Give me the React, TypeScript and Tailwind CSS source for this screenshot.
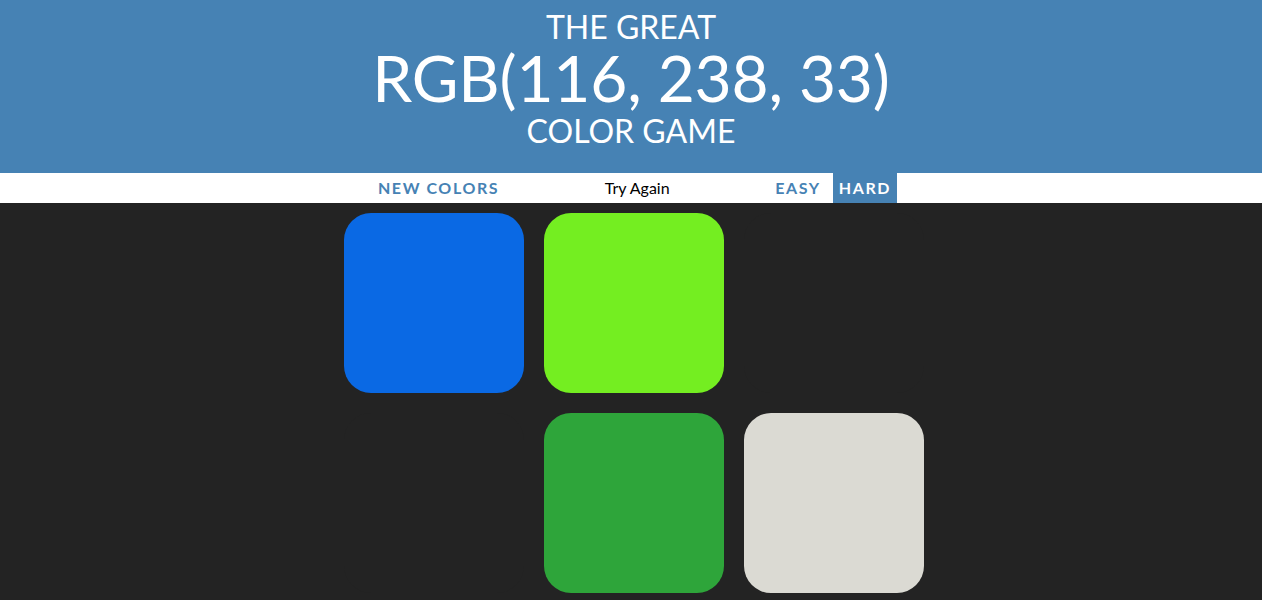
import React from "react";

const squares: (string | null)[] = ["#0a69e4", "#74ee21", null, null, "#2ea53a", "#dbdad3"];

export default function App() {
  return (
    <div className="min-h-[600px] bg-[#232323]" style={{ fontFamily: "Lato, 'Noto Sans', sans-serif" }}>
      <header className="h-[173px] bg-[#4682b4] text-white text-center pt-[8px] font-normal">
        <div className="text-[32px] leading-[37px]">THE GREAT</div>
        <div className="text-[64px] leading-[66px] tracking-[-0.2px]">RGB(116, 238, 33)</div>
        <div className="text-[32px] leading-[40px]">COLOR GAME</div>
      </header>
      <div className="h-[30px] bg-white flex justify-center items-stretch text-[16px] pl-[7px]">
        <button className="px-[6px] font-bold uppercase tracking-[1.6px] text-[#4682b4]">New Colors</button>
        <span className="ml-[4px] w-[256px] flex items-center justify-center text-black">Try Again</span>
        <button className="ml-[4px] px-[6px] font-bold uppercase tracking-[1.6px] text-[#4682b4]">Easy</button>
        <button className="ml-[6px] px-[6px] font-bold uppercase tracking-[1.6px] text-white bg-[#4682b4]">Hard</button>
      </div>
      <div className="w-[600px] mx-auto pt-[10px] pl-[13px] grid grid-cols-[180px_180px_180px] gap-[20px]">
        {squares.map((c, i) => (
          <div
            key={i}
            className="w-[180px] h-[180px] rounded-[27px]"
            style={{ backgroundColor: c ?? "#232323" }}
          />
        ))}
      </div>
    </div>
  );
}
